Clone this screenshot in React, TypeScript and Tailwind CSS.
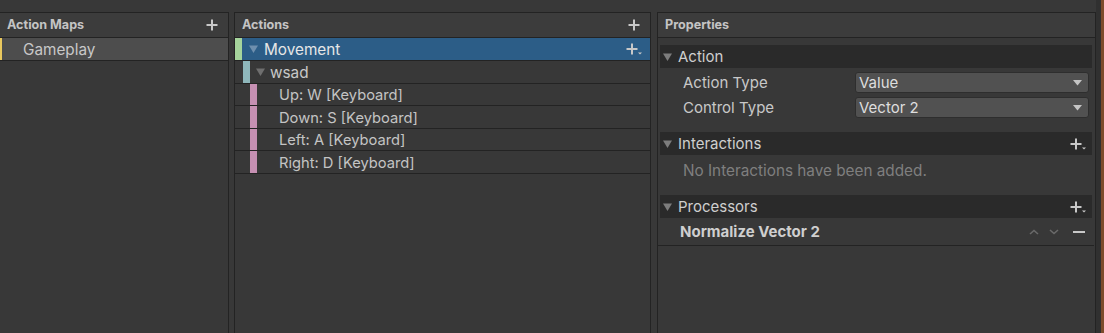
import React from 'react';

const font = { fontFamily: 'Inter, "Noto Sans", sans-serif' };

const Plus = ({ dropdown = false }: { dropdown?: boolean }) => (
  <svg width={dropdown ? 16 : 12} height="12" viewBox={dropdown ? '0 0 16 12' : '0 0 12 12'} className="shrink-0">
    <path d="M6 0.5V11.5M0.5 6H11.5" stroke="#c8c8c8" strokeWidth="2" />
    {dropdown && <path d="M12 9.5H16L14 11.5Z" fill="#c8c8c8" />}
  </svg>
);

const Fold = ({ color = '#7d7d7d' }: { color?: string }) => (
  <svg width="9" height="8" viewBox="0 0 9 8" className="shrink-0">
    <path d="M0 0.5H9L4.5 8Z" fill={color} />
  </svg>
);

const Header = ({ title, plus = true }: { title: string; plus?: boolean }) => (
  <div className="h-[26px] shrink-0 border-y border-[#232323] bg-[#3c3c3c] flex items-center justify-between pl-[7px] pr-[10px]">
    <span className="pt-[1px] text-[12.6px] font-bold text-[#c4c4c4]">{title}</span>
    {plus && <Plus />}
  </div>
);

const Dropdown = ({ value }: { value: string }) => (
  <div className="w-[234px] h-[21px] rounded-[3px] bg-[#515151] border border-[#2e2e2e] flex items-center justify-between pl-[3px] pr-[6px] text-[15px] text-[#dedede]">
    <span className="pt-[1px]">{value}</span>
    <svg width="9" height="6" viewBox="0 0 9 6">
      <path d="M0 0H9L4.5 5.5Z" fill="#c4c4c4" />
    </svg>
  </div>
);

const SectionHeader = ({ title, plus = false }: { title: string; plus?: boolean }) => (
  <div className="h-[23px] bg-[#2a2a2a] flex items-center pl-[3px] pr-[6px]">
    <Fold />
    <span className="ml-[6px] pt-[2px] text-[15px] text-[#cfcfcf] flex-1">{title}</span>
    {plus && <Plus dropdown />}
  </div>
);

const bindings = ['Up: W [Keyboard]', 'Down: S [Keyboard]', 'Left: A [Keyboard]', 'Right: D [Keyboard]'];

export default function App() {
  return (
    <div className="w-[1104px] h-[333px] bg-[#383838] flex overflow-hidden select-none pt-[12px]" style={font}>
      {/* Action maps */}
      <div className="w-[229px] shrink-0 flex flex-col border-r border-[#232323]">
        <Header title="Action Maps" />
        <div className="h-[23px] border-b border-[#232323] bg-[#4d4d4d] flex items-center">
          <div className="w-[2px] h-full bg-[#e9c85e]" />
          <span className="ml-[21px] pt-[2px] text-[15.3px] text-[#c8c8c8]">Gameplay</span>
        </div>
      </div>

      <div className="w-[5px] shrink-0" />

      {/* Actions */}
      <div className="w-[417px] shrink-0 flex flex-col border-x border-[#232323]">
        <Header title="Actions" />
        <div className="h-[23px] border-b border-[#232323] bg-[#2c5d87] flex items-center pr-[8px]">
          <div className="w-[7px] h-full bg-[#a6d49c]" />
          <span className="ml-[7px]"><Fold color="#6e8fae" /></span>
          <span className="ml-[6px] pt-[2px] text-[15.3px] text-[#e6e6e6] flex-1">Movement</span>
          <Plus dropdown />
        </div>
        <div className="h-[23px] border-b border-[#232323] flex items-center">
          <div className="ml-[8px] w-[7px] h-full bg-[#8fb7bb]" />
          <span className="ml-[6px]"><Fold color="#6f6f6f" /></span>
          <span className="ml-[5px] pt-[2px] text-[15.3px] text-[#c8c8c8]">wsad</span>
        </div>
        {bindings.map((b, i) => (
          <div key={b} className={`${i % 2 === 0 ? 'h-[22px]' : 'h-[23px]'} border-b border-[#232323] flex items-center`}>
            <div className="ml-[15px] w-[7px] h-full bg-[#c690b3]" />
            <span className="ml-[22px] pt-[2px] text-[14.7px] text-[#c4c4c4]">{b}</span>
          </div>
        ))}
      </div>

      <div className="w-[6px] shrink-0" />

      {/* Properties */}
      <div className="w-[439px] shrink-0 flex flex-col border-x border-[#232323]">
        <Header title="Properties" plus={false} />
        <div className="pl-[2px] pr-[3px] pt-[7px] flex flex-col">
          <SectionHeader title="Action" />
          <div className="h-[25px] flex items-center justify-between pl-[23px] pr-[3px] pt-[4px]">
            <span className="pt-[1px] text-[15px] text-[#c8c8c8]">Action Type</span>
            <Dropdown value="Value" />
          </div>
          <div className="h-[25px] flex items-center justify-between pl-[23px] pr-[3px] pt-[4px]">
            <span className="pt-[1px] text-[15px] text-[#c8c8c8]">Control Type</span>
            <Dropdown value="Vector 2" />
          </div>
          <div className="h-[14px]" />
          <SectionHeader title="Interactions" plus />
          <div className="h-[29px] flex items-center pl-[23px]">
            <span className="pt-[3px] text-[15.3px] text-[#7f7f7f]">No Interactions have been added.</span>
          </div>
          <div className="h-[11px]" />
          <SectionHeader title="Processors" plus />
          <div className="h-[28px] border-b border-[#232323] flex items-center pl-[22px] pr-[6px] -mx-[2px]">
            <span className="pt-[2px] text-[15px] font-bold text-[#cfcfcf] flex-1">Normalize Vector 2</span>
            <svg width="10" height="6" viewBox="0 0 10 6" className="mr-[10px]">
              <path d="M1 5L5 1.5L9 5" stroke="#6a6a6a" strokeWidth="1.6" fill="none" />
            </svg>
            <svg width="10" height="6" viewBox="0 0 10 6" className="mr-[14px]">
              <path d="M1 1L5 4.5L9 1" stroke="#6a6a6a" strokeWidth="1.6" fill="none" />
            </svg>
            <svg width="12" height="2" viewBox="0 0 12 2" className="mr-[3px]">
              <path d="M0 1H12" stroke="#c8c8c8" strokeWidth="2" />
            </svg>
          </div>
        </div>
      </div>

      <div className="w-[5px] shrink-0 bg-[#303030] -mt-[12px]" />
      <div className="flex-1 bg-[#7b4b2c] -mt-[12px]" />
    </div>
  );
}
